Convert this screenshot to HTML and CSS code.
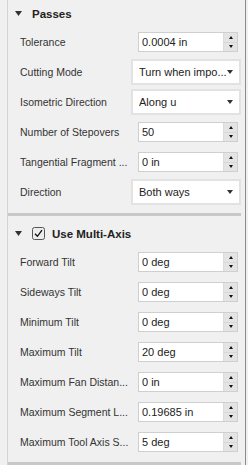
FILE: index.html
```html
<!DOCTYPE html>
<html>
<head>
<meta charset="utf-8">
<link rel="stylesheet" href="styles.css">
</head>
<body>
<div class="panel">
  <div class="section-header">
    <svg class="tri" width="7" height="5" viewBox="0 0 7 5"><path d="M0 0H7L3.5 5Z" fill="#333"/></svg>
    <span class="title">Passes</span>
  </div>
  <div class="row"><span class="label">Tolerance</span><div class="spin"><span class="val">0.0004 in</span><span class="btns"><span class="b"><i class="up"></i></span><span class="b"><i class="dn"></i></span></span></div></div>
  <div class="row"><span class="label">Cutting Mode</span><div class="select"><span class="val">Turn when impo...</span><i class="dn"></i></div></div>
  <div class="row"><span class="label">Isometric Direction</span><div class="select"><span class="val">Along u</span><i class="dn"></i></div></div>
  <div class="row"><span class="label">Number of Stepovers</span><div class="spin"><span class="val">50</span><span class="btns"><span class="b"><i class="up"></i></span><span class="b"><i class="dn"></i></span></span></div></div>
  <div class="row"><span class="label">Tangential Fragment ...</span><div class="spin"><span class="val">0 in</span><span class="btns"><span class="b"><i class="up"></i></span><span class="b"><i class="dn"></i></span></span></div></div>
  <div class="row"><span class="label">Direction</span><div class="select"><span class="val">Both ways</span><i class="dn"></i></div></div>
  <div class="divider"></div>
  <div class="section-header second">
    <svg class="tri" width="7" height="5" viewBox="0 0 7 5"><path d="M0 0H7L3.5 5Z" fill="#333"/></svg>
    <svg class="check" width="13" height="13" viewBox="0 0 13 13"><rect x="0.5" y="0.5" width="12" height="12" rx="2" fill="#ececec" stroke="#555"/><path d="M3 6.8L5.4 9.3L10 3.2" fill="none" stroke="#111" stroke-width="1.3"/></svg>
    <span class="title">Use Multi-Axis</span>
  </div>
  <div class="row"><span class="label">Forward Tilt</span><div class="spin"><span class="val">0 deg</span><span class="btns"><span class="b"><i class="up"></i></span><span class="b"><i class="dn"></i></span></span></div></div>
  <div class="row"><span class="label">Sideways Tilt</span><div class="spin"><span class="val">0 deg</span><span class="btns"><span class="b"><i class="up"></i></span><span class="b"><i class="dn"></i></span></span></div></div>
  <div class="row"><span class="label">Minimum Tilt</span><div class="spin"><span class="val">0 deg</span><span class="btns"><span class="b"><i class="up"></i></span><span class="b"><i class="dn"></i></span></span></div></div>
  <div class="row"><span class="label">Maximum Tilt</span><div class="spin"><span class="val">20 deg</span><span class="btns"><span class="b"><i class="up"></i></span><span class="b"><i class="dn"></i></span></span></div></div>
  <div class="row"><span class="label">Maximum Fan Distan...</span><div class="spin"><span class="val">0 in</span><span class="btns"><span class="b"><i class="up"></i></span><span class="b"><i class="dn"></i></span></span></div></div>
  <div class="row"><span class="label">Maximum Segment L...</span><div class="spin"><span class="val">0.19685 in</span><span class="btns"><span class="b"><i class="up"></i></span><span class="b"><i class="dn"></i></span></span></div></div>
  <div class="row"><span class="label">Maximum Tool Axis S...</span><div class="spin"><span class="val">5 deg</span><span class="btns"><span class="b"><i class="up"></i></span><span class="b"><i class="dn"></i></span></span></div></div>
  <div class="bottom"></div>
</div>
</body>
</html>
```
FILE: styles.css
```css
html, body {
  margin: 0;
  padding: 0;
  background: #f0f0f0;
  font-family: "Liberation Sans", Arial, sans-serif;
}
.panel {
  margin-left: 7px;
  width: 237px;
  height: 465px;
  border-left: 1px solid #d4d4d4;
  border-right: 1px solid #8c8c8c;
  box-sizing: content-box;
  overflow: hidden;
}
.section-header {
  height: 27px;
  display: flex;
  align-items: center;
  padding-left: 7px;
  color: #222;
}
.section-header.second {
  margin-top: 4px;
}
.tri {
  display: block;
  margin-right: 10px;
}
.check {
  display: block;
  margin-right: 7px;
}
.title {
  font-weight: bold;
  font-size: 11.5px;
}
.row {
  height: 30px;
  display: flex;
  align-items: center;
  justify-content: space-between;
  padding-left: 12px;
}
.label {
  font-size: 10.5px;
  color: #333;
  white-space: nowrap;
}
.spin {
  width: 100px;
  height: 20px;
  box-sizing: border-box;
  border: 1px solid #cfcfcf;
  background: #fff;
  display: flex;
  align-items: stretch;
  margin-right: 7px;
}
.spin .val {
  flex: 1;
  font-size: 11px;
  color: #222;
  padding-left: 3px;
  line-height: 18px;
}
.btns {
  width: 13px;
  display: flex;
  flex-direction: column;
  background: #e4e4e4;
  border-left: 1px solid #dcdcdc;
}
.b {
  flex: 1;
  display: flex;
  align-items: center;
  justify-content: center;
}
.b + .b {
  border-top: 1px solid #d8d8d8;
}
.up {
  width: 0;
  height: 0;
  border-left: 2.5px solid transparent;
  border-right: 2.5px solid transparent;
  border-bottom: 3px solid #111;
}
.dn {
  width: 0;
  height: 0;
  border-left: 2.5px solid transparent;
  border-right: 2.5px solid transparent;
  border-top: 3px solid #111;
}
.select {
  width: 110px;
  height: 26px;
  box-sizing: border-box;
  border: 2px solid #e2e2e2;
  background: #fff;
  display: flex;
  align-items: center;
  padding: 0 6px 0 6px;
  margin-right: 4px;
}
.select .val {
  flex: 1;
  font-size: 11px;
  color: #222;
  white-space: nowrap;
  overflow: hidden;
}
.select .dn {
  border-left-width: 3px;
  border-right-width: 3px;
  border-top-width: 4px;
  border-top-color: #333;
}
.divider {
  margin-top: 6px;
  margin-right: 4px;
  height: 3px;
  background: #c8c8c8;
}
.bottom {
  margin-top: 5px;
  height: 3px;
  background: #c8c8c8;
  margin-right: 4px;
}
```
